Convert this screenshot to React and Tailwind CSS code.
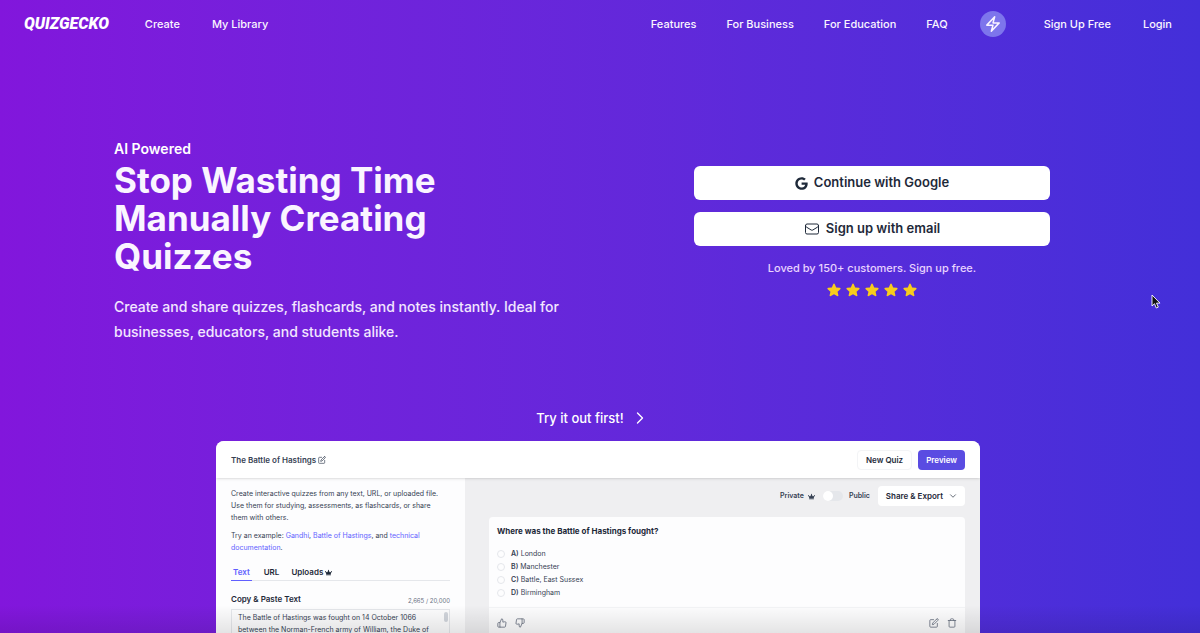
import { useState } from "react";
import { FaGoogle, FaCrown } from "react-icons/fa";
import { FiEdit, FiThumbsUp, FiThumbsDown, FiTrash } from "react-icons/fi";
import {
  HiOutlineBolt,
  HiOutlineEnvelope,
  HiOutlineChevronRight,
  HiOutlineChevronDown,
  HiStar,
} from "react-icons/hi2";

const sampleText =
  "The Battle of Hastings was fought on 14 October 1066 between the Norman-French army of William, the Duke of Normandy, and an English army under the Anglo-Saxon King Harold Godwinson, beginning the Norman Conquest of England.";

const answers = [
  { key: "A", text: "London" },
  { key: "B", text: "Manchester" },
  { key: "C", text: "Battle, East Sussex" },
  { key: "D", text: "Birmingham" },
];

export default function App() {
  return (
    <div className="relative h-screen overflow-hidden bg-linear-to-r from-[#8216dc] to-[#432fd9] font-[Inter,sans-serif] text-white">
      <Navbar />
      <main className="pr-1">
        <Hero />
        <div className="flex justify-center pt-16 pr-3">
          <a href="#try" className="flex items-center gap-2 text-[13px] leading-5 font-medium">
            Try it out first!
            <HiOutlineChevronRight className="size-4 stroke-2" />
          </a>
        </div>
        <QuizEditor />
      </main>
      <div className="pointer-events-none absolute inset-x-0 bottom-0 h-7 bg-linear-to-b from-transparent to-black/10" />
      <Cursor />
    </div>
  );
}

function Navbar() {
  return (
    <nav className="flex items-center justify-between pt-2 pr-7 pl-6 text-[11px] font-medium text-purple-50">
      <div className="flex items-center gap-8">
        <a href="#home" className="mr-1 font-[Roboto,sans-serif] text-base leading-8 font-black text-white italic">
          QUIZGECKO
        </a>
        <a href="#create">Create</a>
        <a href="#library">My Library</a>
      </div>
      <div className="flex items-center gap-8">
        <div className="flex items-center gap-[30px]">
          <a href="#features">Features</a>
          <a href="#business">For Business</a>
          <a href="#education">For Education</a>
          <a href="#faq">FAQ</a>
        </div>
        <button aria-label="Upgrade" className="mr-1.5 flex size-[26px] items-center justify-center rounded-full bg-[#7d75ec]">
          <HiOutlineBolt className="size-[18px] stroke-2" />
        </button>
        <a href="#signup">Sign Up Free</a>
        <a href="#login">Login</a>
      </div>
    </nav>
  );
}

function Hero() {
  return (
    <section className="mx-auto flex max-w-[968px] items-start justify-between pt-[97px]">
      <div className="max-w-[470px]">
        <p className="text-sm leading-6 font-semibold">AI Powered</p>
        <h1 className="max-w-[350px] text-[35px] leading-[38px] font-bold text-purple-50">
          Stop Wasting Time Manually Creating Quizzes
        </h1>
        <p className="pt-[19px] text-sm leading-[25px] font-medium text-purple-100">
          Create and share quizzes, flashcards, and notes instantly. Ideal for businesses, educators, and students alike.
        </p>
      </div>
      <div className="mr-8 flex w-[356px] flex-col pt-[29px]">
        <button className="flex h-[34px] items-center justify-center gap-1.5 rounded-md bg-white text-[13px] font-semibold text-gray-800">
          <FaGoogle className="size-[13px]" />
          Continue with Google
        </button>
        <button className="mt-3 flex h-[34px] items-center justify-center gap-1.5 rounded-md bg-white text-[13px] font-semibold text-gray-800">
          <HiOutlineEnvelope className="size-4" />
          Sign up with email
        </button>
        <p className="pt-3 text-center text-[11px] leading-5 font-medium text-purple-200">
          Loved by 150+ customers. Sign up free.
        </p>
        <div className="flex justify-center gap-[3px] pt-1 text-[#f8cc1c]">
          {[1, 2, 3, 4, 5].map((n) => (
            <HiStar key={n} className="size-4" />
          ))}
        </div>
      </div>
    </section>
  );
}

function QuizEditor() {
  return (
    <div className="mx-auto mt-[13px] max-w-[764px] overflow-hidden rounded-t-lg bg-[#efeff1] text-gray-700">
      <div className="relative flex h-[37px] items-center justify-between bg-white px-[15px] shadow">
        <h2 className="flex items-center gap-0.5 text-[8px] font-semibold">
          The Battle of Hastings
          <FiEdit className="size-2" />
        </h2>
        <div className="flex gap-1.5">
          <button className="h-5 rounded border border-gray-100 px-2 text-[8px] font-semibold text-gray-800">
            New Quiz
          </button>
          <button className="h-5 rounded bg-[#5a4ce2] px-2 text-[8px] font-semibold text-white">
            Preview
          </button>
        </div>
      </div>
      <div className="flex">
        <SourcePanel />
        <QuestionPanel />
      </div>
    </div>
  );
}

function SourcePanel() {
  const [text, setText] = useState(sampleText);

  return (
    <div className="w-[249px] bg-[#fdfdfe] px-[15px] pt-2.5 text-[8px] leading-3">
      <div className="pr-2 text-[7px]">
        <p>
          Create interactive quizzes from any text, URL, or uploaded file. Use them for studying, assessments, as
          flashcards, or share them with others.
        </p>
        <p className="pt-1.5">
          Try an example: <a href="#gandhi" className="text-indigo-500">Gandhi</a>,{" "}
          <a href="#hastings" className="text-indigo-500">Battle of Hastings</a>, and{" "}
          <a href="#docs" className="text-indigo-500">technical documentation</a>.
        </p>
      </div>
      <div className="mt-3 flex gap-3 border-b border-gray-200 font-semibold text-gray-800">
        <button className="-mb-px border-b border-indigo-500 px-0.5 pb-0.5 text-indigo-500">Text</button>
        <button className="pb-0.5">URL</button>
        <button className="flex items-center gap-0.5 pb-0.5">
          Uploads <FaCrown className="size-[7px]" />
        </button>
      </div>
      <div className="flex items-end justify-between pt-3">
        <label htmlFor="source" className="font-semibold text-gray-800">Copy &amp; Paste Text</label>
        <span className="text-[6px] leading-2 text-gray-500">2,665 / 20,000</span>
      </div>
      <div className="mt-1 flex border border-gray-200">
        <textarea
          id="source"
          className="h-24 grow resize-none overflow-hidden py-0.5 pr-2 pl-1.5 text-[7px] outline-none"
          value={text}
          onChange={(e) => setText(e.target.value)}
        />
        <div className="mt-0.5 mr-px h-2.5 w-1 rounded-sm bg-gray-300" />
      </div>
    </div>
  );
}

function QuestionPanel() {
  const [answer, setAnswer] = useState("");

  return (
    <div className="grow pt-2 pr-[15px] pl-6 text-[8px]">
      <div className="flex items-center justify-end gap-2">
        <span className="flex items-center gap-1 text-[7px] font-semibold">
          Private <FaCrown className="size-[7px]" />
        </span>
        <label className="flex items-center gap-1.5 text-[7px] font-semibold">
          <input
            type="checkbox"
            className="h-2.5 w-5 appearance-none rounded-full bg-gray-200 before:block before:size-2.5 before:rounded-full before:bg-white checked:bg-indigo-500 checked:before:ml-2.5"
          />
          Public
        </label>
        <button className="flex h-5 items-center gap-1.5 rounded bg-white px-2 font-semibold text-gray-800">
          Share &amp; Export
          <HiOutlineChevronDown className="size-2 stroke-2" />
        </button>
      </div>
      <div className="mt-[11px] rounded bg-[#fdfdfe]">
        <div className="px-2 pt-2 pb-2">
          <h3 className="pb-2.5 text-[8px] leading-3 font-bold text-gray-800">
            Where was the Battle of Hastings fought?
          </h3>
          {answers.map((item) => (
            <label key={item.key} className="flex items-center gap-1.5 text-[7px] leading-[13px]">
              <input
                type="radio"
                name="answer"
                className="size-2 appearance-none rounded-full border border-gray-200 checked:bg-indigo-500"
                checked={answer === item.key}
                onChange={() => setAnswer(item.key)}
              />
              <span>
                <b className="font-semibold">{item.key})</b> {item.text}
              </span>
            </label>
          ))}
        </div>
        <div className="flex items-center gap-2 border-t border-gray-100 px-2 py-2.5 text-gray-500">
          <button aria-label="Like"><FiThumbsUp className="size-2.5" /></button>
          <button aria-label="Dislike"><FiThumbsDown className="size-2.5" /></button>
          <button aria-label="Edit" className="ml-auto"><FiEdit className="size-2.5" /></button>
          <button aria-label="Delete"><FiTrash className="size-2.5" /></button>
        </div>
      </div>
    </div>
  );
}

function Cursor() {
  return (
    <svg className="absolute top-[294px] left-[1151px]" width="10" height="15" viewBox="0 0 10 15">
      <path d="M1 1v11l2.5-2.3L5.3 14l2-.9-1.8-4H9z" fill="#111" stroke="#fff" strokeWidth="0.9" />
    </svg>
  );
}
